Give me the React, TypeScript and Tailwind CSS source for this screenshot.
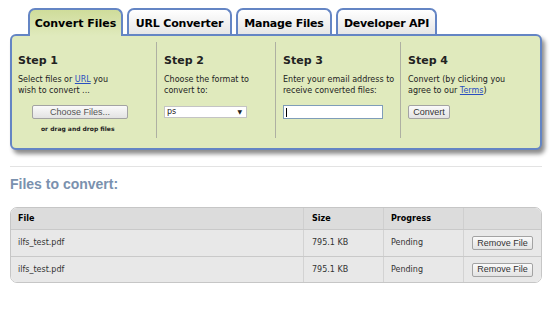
import React from 'react';

const tabs = [
  { label: 'Convert Files', active: true, w: 'w-[95px]' },
  { label: 'URL Converter', active: false, w: 'w-[105px]' },
  { label: 'Manage Files', active: false, w: 'w-[96px]' },
  { label: 'Developer API', active: false, w: 'w-[101px]' },
];

const files = [
  { name: 'ilfs_test.pdf', size: '795.1 KB', status: 'Pending' },
  { name: 'ilfs_test.pdf', size: '795.1 KB', status: 'Pending' },
];

function GrayButton({ children, className = '' }: { children: React.ReactNode; className?: string }) {
  return (
    <button
      className={`flex items-center justify-center border border-[#a3a3a3] rounded-[2px] bg-gradient-to-b from-[#fafafa] to-[#e3e3e3] text-[9px] text-[#333] font-['Liberation_Sans',Arial,sans-serif] leading-none ${className}`}
    >
      {children}
    </button>
  );
}

export default function App() {
  return (
    <div className="w-[550px] h-[312px] bg-white overflow-hidden font-['DejaVu_Sans',Verdana,sans-serif] text-[#222]">
      {/* tabs */}
      <div className="flex gap-[4px] pl-[28px] pt-[8px] relative z-10">
        {tabs.map((t) =>
          t.active ? (
            <div
              key={t.label}
              className={`${t.w} h-[28px] -mb-[2px] border-2 border-b-0 border-[#6485c4] rounded-t-[7px] bg-gradient-to-b from-[#cfdc9a] to-[#e0eabd] flex justify-center pt-[7px] text-[11px] leading-[13px] font-bold text-black whitespace-nowrap`}
            >
              {t.label}
            </div>
          ) : (
            <div
              key={t.label}
              className={`${t.w} h-[26px] border-2 border-b-0 border-[#6485c4] rounded-t-[7px] bg-gradient-to-b from-[#ffffff] to-[#e6e6e6] flex justify-center pt-[7px] text-[11px] leading-[13px] font-bold text-black whitespace-nowrap tracking-[-0.2px]`}
            >
              {t.label}
            </div>
          ),
        )}
      </div>

      {/* panel */}
      <div className="ml-[10px] w-[532px] h-[116px] border-2 border-[#6485c4] rounded-[6px] bg-[#e0eabd] shadow-[3px_4px_4px_rgba(0,0,0,0.45)] pt-[6px]">
        <div className="grid grid-cols-[144px_119px_125px_1fr] h-[96px]">
          <div className="pl-[6px] pt-[12px]">
            <h2 className="text-[11px] leading-[13px] font-bold">Step 1</h2>
            <p className="mt-[8px] text-[8px] leading-[10.5px]">
              Select files or <span className="text-[#2a4fc0] underline">URL</span> you
              <br />
              wish to convert ...
            </p>
            <GrayButton className="mt-[9px] ml-[14px] w-[96px] h-[14px] text-[#555]">Choose Files...</GrayButton>
            <p className="mt-[6px] ml-[23px] text-[6px] leading-[7px] font-bold">or drag and drop files</p>
          </div>

          <div className="border-l border-[#aeb0a2] pl-[7px] pt-[12px]">
            <h2 className="text-[11px] leading-[13px] font-bold">Step 2</h2>
            <p className="mt-[8px] text-[8px] leading-[10.5px]">
              Choose the format to
              <br />
              convert to:
            </p>
            <div className="mt-[10px] w-[83px] h-[12px] bg-white border border-[#c4c4c4] flex items-center justify-between pl-[2px] pr-[4px] text-[8px] leading-none">
              <span>ps</span>
              <span className="text-[6px]">▼</span>
            </div>
          </div>

          <div className="border-l border-[#aeb0a2] pl-[7px] pt-[12px]">
            <h2 className="text-[11px] leading-[13px] font-bold">Step 3</h2>
            <p className="mt-[8px] text-[8px] leading-[10.5px]">
              Enter your email address to
              <br />
              receive converted files:
            </p>
            <div className="mt-[9px] w-[100px] h-[14px] bg-white border border-[#7f9db9] flex items-center pl-[2px]">
              <span className="w-[1px] h-[9px] bg-black" />
            </div>
          </div>

          <div className="border-l border-[#aeb0a2] pl-[7px] pt-[12px]">
            <h2 className="text-[11px] leading-[13px] font-bold">Step 4</h2>
            <p className="mt-[8px] text-[8px] leading-[10.5px]">
              Convert (by clicking you
              <br />
              agree to our <span className="text-[#2a4fc0] underline">Terms</span>)
            </p>
            <GrayButton className="mt-[9px] w-[42px] h-[14px]">Convert</GrayButton>
          </div>
        </div>
      </div>

      {/* divider */}
      <div className="mt-[16px] ml-[10px] w-[532px] border-t border-[#e3e3e3]" />

      <h1 className="mt-[9px] ml-[10px] text-[14px] leading-[16px] font-bold text-[#7a91ae] font-['Liberation_Sans',Arial,sans-serif]">
        Files to convert:
      </h1>

      {/* files table */}
      <div className="mt-[15px] ml-[10px] w-[532px] border border-[#c6c6c6] rounded-[7px] overflow-hidden text-[8px] leading-none">
        <div className="grid grid-cols-[292px_80px_80px_1fr] h-[21px] bg-[#dcdcdc] font-bold text-black">
          <div className="pl-[7px] flex items-center">File</div>
          <div className="border-l border-[#cfcfcf] pl-[8px] flex items-center">Size</div>
          <div className="border-l border-[#cfcfcf] pl-[7px] flex items-center">Progress</div>
          <div className="border-l border-[#cfcfcf]" />
        </div>
        {files.map((f, i) => (
          <div
            key={i}
            className={`grid grid-cols-[292px_80px_80px_1fr] bg-[#e8e8e8] border-t border-[#c9c9c9] text-[#333] ${i === files.length - 1 ? 'h-[26px]' : 'h-[27px]'}`}
          >
            <div className="pl-[7px] flex items-center">{f.name}</div>
            <div className="border-l border-[#d3d3d3] pl-[8px] flex items-center">{f.size}</div>
            <div className="border-l border-[#d3d3d3] pl-[7px] flex items-center">{f.status}</div>
            <div className="border-l border-[#d3d3d3] flex items-center justify-center">
              <GrayButton className="w-[61px] h-[14px]">Remove File</GrayButton>
            </div>
          </div>
        ))}
      </div>
    </div>
  );
}
